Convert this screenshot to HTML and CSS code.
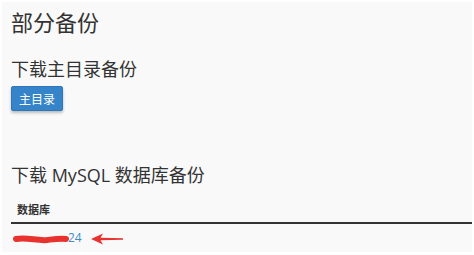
FILE: index.html
```html
<!DOCTYPE html>
<html lang="zh">
<head>
    <meta charset="UTF-8">
    <title>部分备份</title>
    <link rel="stylesheet" href="styles.css">
</head>
<body>
    <div class="page">
        <h1>部分备份</h1>
        <h2>下载主目录备份</h2>
        <button class="btn">主目录</button>

        <h2 class="sql">下载 MySQL 数据库备份</h2>
        <table class="db">
            <thead><tr><th>数据库</th></tr></thead>
            <tbody>
                <tr><td>
                    <a href="#" class="link"><svg class="mask" width="56" height="12" viewBox="0 0 56 12">
                        <path d="M3 6 C14 4 24 8 34 7 C42 6 48 5 53 6" stroke="#e8322e" stroke-width="6" stroke-linecap="round" fill="none"/>
                    </svg>24</a>
                    <svg class="arrow" width="34" height="12" viewBox="0 0 34 12">
                        <path d="M1 6 L13 0.5 L10.5 4.8 L33 5.3 L33 6.7 L10.5 7.2 L13 11.5 Z" fill="#e8322e"/>
                    </svg>
                </td></tr>
            </tbody>
        </table>
    </div>
</body>
</html>
```

FILE: styles.css
```css
body {margin: 0; background: #fff; font-family: "Open Sans", "Noto Sans CJK SC", sans-serif; color: #333;}
.page {
    margin: 2px 2px 3px 2px; height: 250px; background: #f9f9f9;
    padding: 0 0 0 9px; overflow: hidden;
}
h1 {font-size: 22px; font-weight: normal; margin: 0; padding-top: 5px; line-height: 30px;}
h2 {font-size: 18px; font-weight: normal; margin: 0; padding-top: 20px; line-height: 24px;}
.btn {
    margin-top: 5px; display: block; white-space: nowrap;
    background: #3584c9; color: #fff; border: 1px solid #2f77b8; border-radius: 2px;
    font-size: 12px; font-family: inherit; padding: 0 7px; height: 25px;
    box-shadow: 0 2px 3px rgba(0,0,0,.25);
}
.sql {padding-top: 52px;}
.db {border-collapse: collapse; margin-top: 10px; width: calc(100% + 2px);}
.db th {
    text-align: left; font-size: 11px; font-weight: bold; padding: 4px 6px 5px;
    border-bottom: 2px solid #333;
}
.db td {padding: 5px 2px; font-size: 12px;}
.link {color: #428bca; text-decoration: none;}
.mask {vertical-align: middle; margin-right: -1px;}
.arrow {vertical-align: middle; margin-left: 5px;}
```
